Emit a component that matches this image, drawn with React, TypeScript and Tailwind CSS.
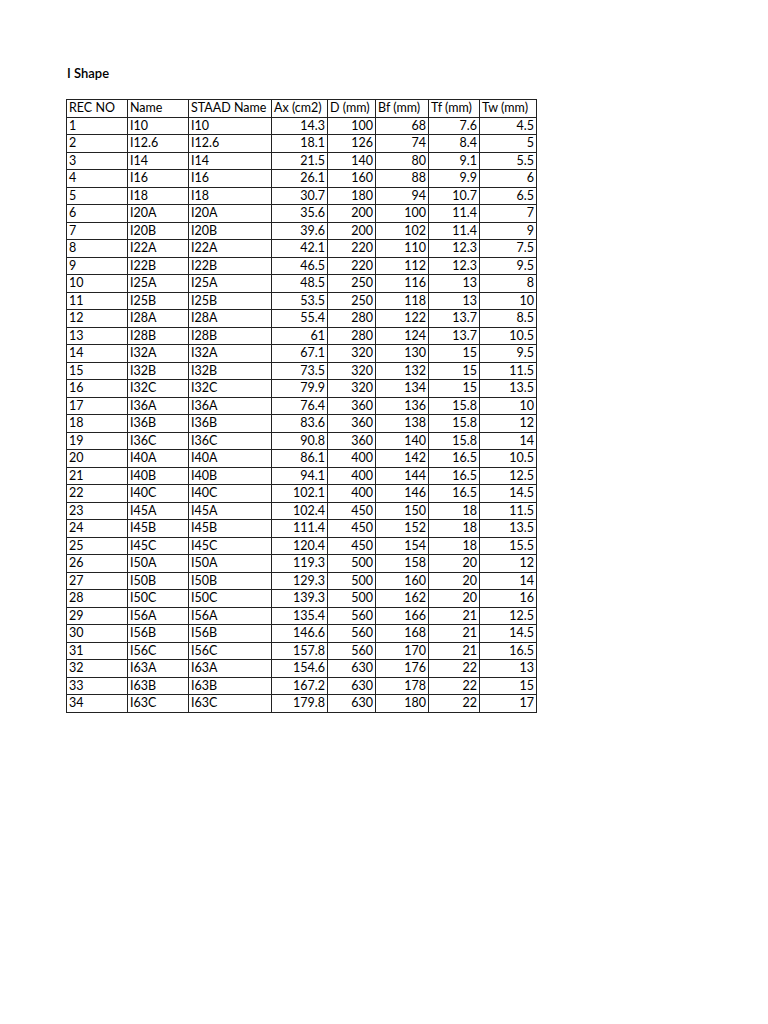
const rows: [string, string, string, string, string, string, string, string][] = [
  ["1", "I10", "I10", "14.3", "100", "68", "7.6", "4.5"],
  ["2", "I12.6", "I12.6", "18.1", "126", "74", "8.4", "5"],
  ["3", "I14", "I14", "21.5", "140", "80", "9.1", "5.5"],
  ["4", "I16", "I16", "26.1", "160", "88", "9.9", "6"],
  ["5", "I18", "I18", "30.7", "180", "94", "10.7", "6.5"],
  ["6", "I20A", "I20A", "35.6", "200", "100", "11.4", "7"],
  ["7", "I20B", "I20B", "39.6", "200", "102", "11.4", "9"],
  ["8", "I22A", "I22A", "42.1", "220", "110", "12.3", "7.5"],
  ["9", "I22B", "I22B", "46.5", "220", "112", "12.3", "9.5"],
  ["10", "I25A", "I25A", "48.5", "250", "116", "13", "8"],
  ["11", "I25B", "I25B", "53.5", "250", "118", "13", "10"],
  ["12", "I28A", "I28A", "55.4", "280", "122", "13.7", "8.5"],
  ["13", "I28B", "I28B", "61", "280", "124", "13.7", "10.5"],
  ["14", "I32A", "I32A", "67.1", "320", "130", "15", "9.5"],
  ["15", "I32B", "I32B", "73.5", "320", "132", "15", "11.5"],
  ["16", "I32C", "I32C", "79.9", "320", "134", "15", "13.5"],
  ["17", "I36A", "I36A", "76.4", "360", "136", "15.8", "10"],
  ["18", "I36B", "I36B", "83.6", "360", "138", "15.8", "12"],
  ["19", "I36C", "I36C", "90.8", "360", "140", "15.8", "14"],
  ["20", "I40A", "I40A", "86.1", "400", "142", "16.5", "10.5"],
  ["21", "I40B", "I40B", "94.1", "400", "144", "16.5", "12.5"],
  ["22", "I40C", "I40C", "102.1", "400", "146", "16.5", "14.5"],
  ["23", "I45A", "I45A", "102.4", "450", "150", "18", "11.5"],
  ["24", "I45B", "I45B", "111.4", "450", "152", "18", "13.5"],
  ["25", "I45C", "I45C", "120.4", "450", "154", "18", "15.5"],
  ["26", "I50A", "I50A", "119.3", "500", "158", "20", "12"],
  ["27", "I50B", "I50B", "129.3", "500", "160", "20", "14"],
  ["28", "I50C", "I50C", "139.3", "500", "162", "20", "16"],
  ["29", "I56A", "I56A", "135.4", "560", "166", "21", "12.5"],
  ["30", "I56B", "I56B", "146.6", "560", "168", "21", "14.5"],
  ["31", "I56C", "I56C", "157.8", "560", "170", "21", "16.5"],
  ["32", "I63A", "I63A", "154.6", "630", "176", "22", "13"],
  ["33", "I63B", "I63B", "167.2", "630", "178", "22", "15"],
  ["34", "I63C", "I63C", "179.8", "630", "180", "22", "17"],
];

const headers = ["REC NO", "Name", "STAAD Name", "Ax (cm2)", "D (mm)", "Bf (mm)", "Tf (mm)", "Tw (mm)"];
const widths = ["w-[61px]", "w-[61px]", "w-[83px]", "w-[56px]", "w-[48px]", "w-[53px]", "w-[51px]", "w-[57px]"];

export default function App() {
  return (
    <div className="w-[768px] h-[1024px] bg-white text-black font-['Lato',sans-serif] text-[12.5px] leading-none">
      <div className="pl-[67px] pt-[67px] text-[13px] font-semibold">I Shape</div>
      <table className="ml-[66px] mt-[19px] border-collapse table-fixed">
        <colgroup>
          {widths.map((w, i) => (
            <col key={i} className={w} />
          ))}
        </colgroup>
        <thead>
          <tr className="h-[17.5px]">
            {headers.map((h) => (
              <th key={h} className="border border-[#222] px-[2px] text-left font-normal whitespace-nowrap">
                {h}
              </th>
            ))}
          </tr>
        </thead>
        <tbody>
          {rows.map((r) => (
            <tr key={r[0]} className="h-[17.5px]">
              {r.map((c, i) => (
                <td
                  key={i}
                  className={`border border-[#222] px-[2px] whitespace-nowrap ${i < 3 ? "text-left" : "text-right"}`}
                >
                  {c}
                </td>
              ))}
            </tr>
          ))}
        </tbody>
      </table>
    </div>
  );
}
